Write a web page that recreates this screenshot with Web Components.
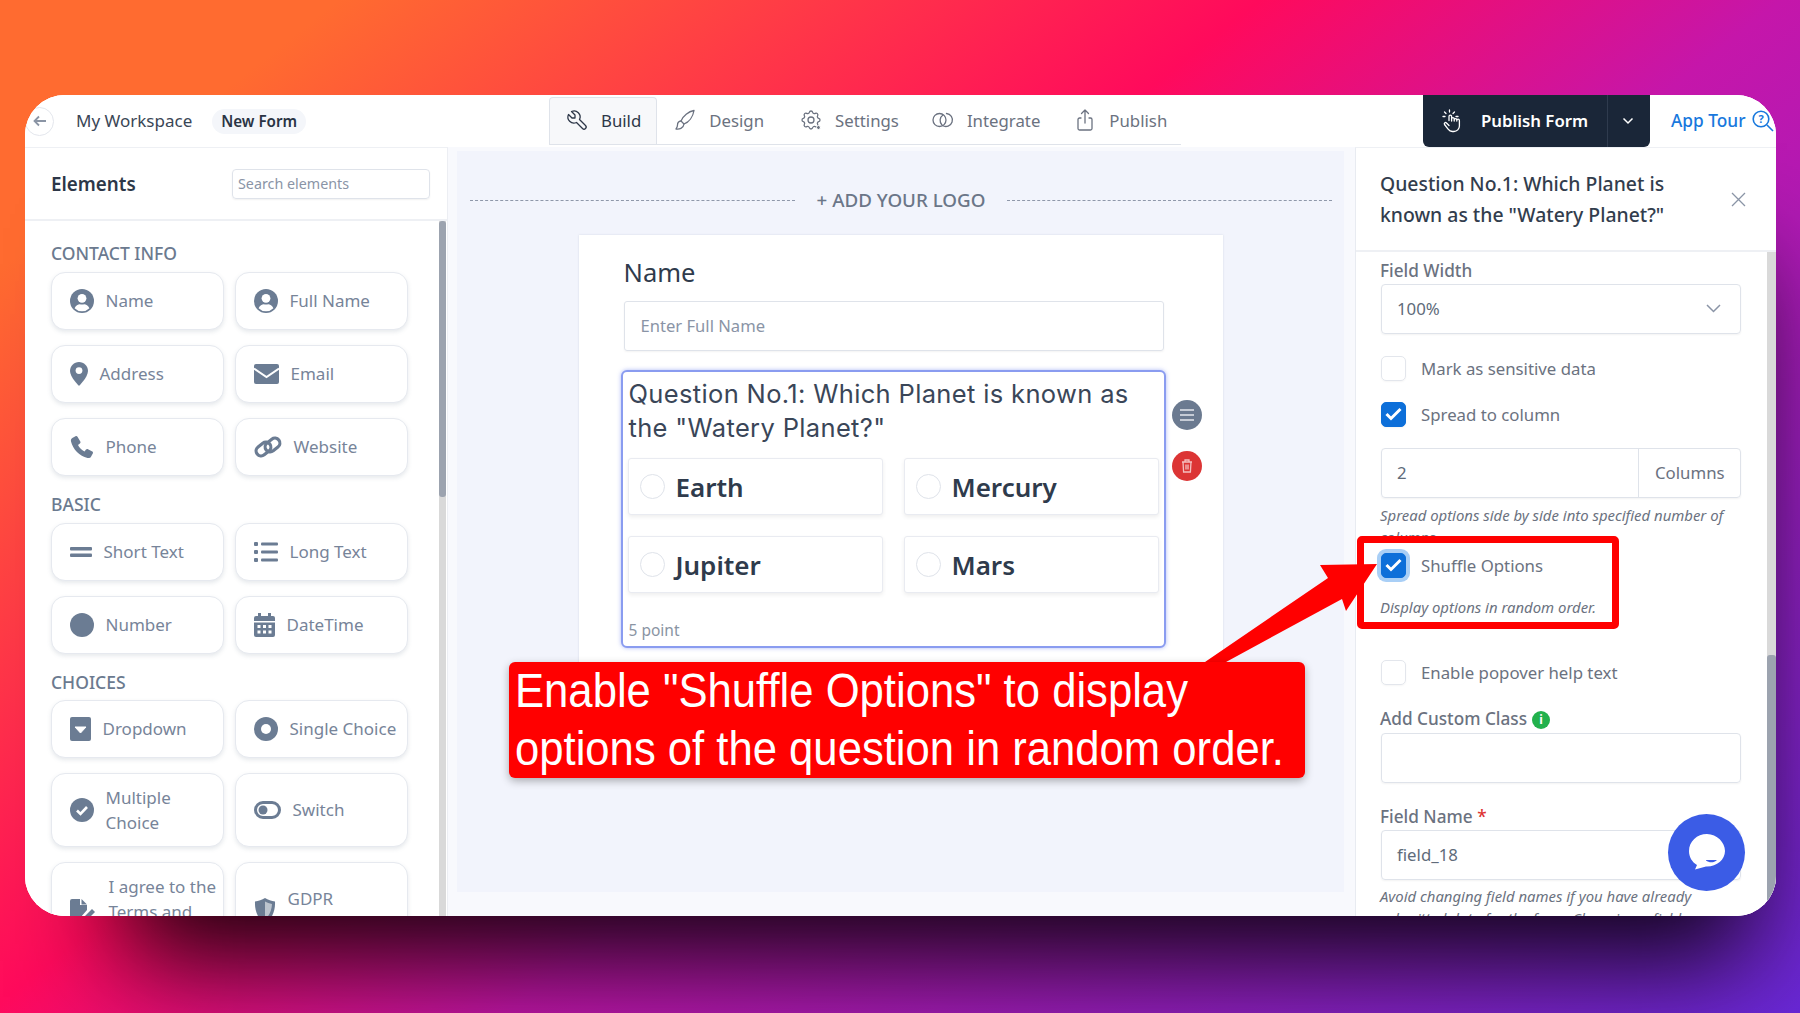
<!DOCTYPE html>
<html lang="en">
<head>
<meta charset="utf-8">
<title>Form builder</title>
<style>
html,body{margin:0;padding:0;height:1013px;overflow:hidden}
body{font-family:"Noto Sans",sans-serif;background:linear-gradient(141.5deg,#ff6b30 11%,#ff0a5c 41%,#c516aa 58%,#6a28d8 100%)}
</style>
</head>
<body>
<app-window>
  <top-bar slot="top"></top-bar>
  <element-panel slot="left"></element-panel>
  <form-canvas slot="center"></form-canvas>
  <settings-panel slot="right"></settings-panel>
</app-window>
<script>
const ICONS={
user:[24,24,'<circle cx="12" cy="12" r="12"/><circle cx="12" cy="9.3" r="4.4" fill="#fff"/><path d="M4.6 19.2c1-2.8 3.6-4 5.2-4 1.4.5 3 .5 4.4 0 1.6 0 4.2 1.2 5.2 4a10.4 10.4 0 0 1-14.8 0z" fill="#fff"/>'],
marker:[18,24,'<path d="M9 0C4 0 0 4 0 9c0 6 9 15 9 15s9-9 9-15C18 4 14 0 9 0z"/><circle cx="9" cy="8.6" r="3.4" fill="#fff"/>'],
mail:[25,20,'<rect width="25" height="20" rx="2"/><path d="M0 4.5 12.5 13 25 4.5" fill="none" stroke="#fff" stroke-width="2"/>'],
phone:[24,24,'<path d="M5.5 1.2 2.3 3C1 3.8.7 5 1 6.5 2.8 14.3 9.7 21.2 17.5 23c1.5.3 2.7 0 3.5-1.3l1.8-3.2c.4-.8.2-1.6-.5-2l-4.3-2.3c-.7-.4-1.5-.2-2 .4l-1.5 1.9c-2.7-1.3-5.2-3.8-6.5-6.5l1.9-1.5c.6-.5.8-1.3.4-2L7.5 1.7c-.4-.7-1.2-.9-2-.5z"/>'],
link:[28,24,'<g fill="none" stroke="currentColor" stroke-width="3.2"><rect x="1.5" y="9" width="16" height="10" rx="5" transform="rotate(-38 9.5 14)"/><rect x="10.5" y="5" width="16" height="10" rx="5" transform="rotate(-38 18.5 10)"/></g>'],
lines:[22,12,'<rect y="1" width="22" height="3.4" rx="1"/><rect y="7.6" width="22" height="3.4" rx="1"/>'],
list:[24,20,'<rect width="4" height="4" rx="1"/><rect y="8" width="4" height="4" rx="1"/><rect y="16" width="4" height="4" rx="1"/><rect x="7" y=".6" width="17" height="2.8" rx="1"/><rect x="7" y="8.6" width="17" height="2.8" rx="1"/><rect x="7" y="16.6" width="17" height="2.8" rx="1"/>'],
circle:[24,24,'<circle cx="12" cy="12" r="12"/>'],
cal:[21,24,'<path d="M4 0h3v3h7V0h3v3h2a2 2 0 0 1 2 2v3H0V5a2 2 0 0 1 2-2h2z"/><path d="M0 9.500h21V22a2 2 0 0 1-2 2H2a2 2 0 0 1-2-2z"/><g fill="#fff"><rect x="3.500" y="12" width="3" height="3"/><rect x="9" y="12" width="3" height="3"/><rect x="14.500" y="12" width="3" height="3"/><rect x="3.500" y="17.500" width="3" height="3"/><rect x="9" y="17.500" width="3" height="3"/><rect x="14.500" y="17.500" width="3" height="3"/></g>'],
drop:[21,24,'<rect width="21" height="24" rx="2"/><path d="M5 10h11l-5.500 6z" fill="#fff" stroke="#fff" stroke-linejoin="round"/>'],
dot:[24,24,'<circle cx="12" cy="12" r="12"/><circle cx="12" cy="12" r="5" fill="#fff"/>'],
check:[24,24,'<circle cx="12" cy="12" r="12"/><path d="M7 12.500l3.500 3.500L17 9" fill="none" stroke="#fff" stroke-width="2.600"/>'],
toggle:[27,18,'<rect x="1.500" y="1.500" width="24" height="15" rx="7.500" fill="none" stroke="currentColor" stroke-width="3"/><circle cx="9" cy="9" r="4.500"/>'],
sign:[27,24,'<path d="M0 2a2 2 0 0 1 2-2h8v6h7v5l-7 8v5H2a2 2 0 0 1-2-2z"/><path d="M11.500 0l5.500 5.500h-5.500z"/><path d="M13 19l9-9 3 3-9 9-4 1z"/>'],
shield:[22,26,'<path d="M11 0c3 2 6.500 3 10 3.500C21.500 13 18 21 11 26 4 21 .5 13 1 3.500 4.500 3 8 2 11 0z"/><path d="M11 3.500v18c4-3.500 6.800-9 7-15.500-2.500-.5-5-1.300-7-2.500z" fill="#fff" opacity=".55"/>']
};
const STROKES={
tool:'<path d="M7 10h3V7L6.500 3.500a6 6 0 0 1 8 8l6 6a2.100 2.100 0 0 1-3 3l-6-6a6 6 0 0 1-8-8z"/>',
brush:'<path d="M21 2.500c-5.500 1-11 5.500-13 10.500l3 3c5-2 9-7.500 10-13.500z"/><path d="M8 13c-2.500.3-3.500 2-3.500 4 0 1.800-.7 3-1.500 4 3 .5 7.500-.5 8-5"/>',
gear:'<path d="M10.325 4.317c.426-1.756 2.924-1.756 3.350 0a1.724 1.724 0 0 0 2.573 1.066c1.543-.94 3.310.826 2.370 2.370a1.724 1.724 0 0 0 1.065 2.572c1.756.426 1.756 2.924 0 3.350a1.724 1.724 0 0 0-1.066 2.573c.94 1.543-.826 3.310-2.370 2.370a1.724 1.724 0 0 0-2.572 1.065c-.426 1.756-2.924 1.756-3.350 0a1.724 1.724 0 0 0-2.573-1.066c-1.543.94-3.310-.826-2.370-2.370a1.724 1.724 0 0 0-1.065-2.572c-1.756-.426-1.756-2.924 0-3.350a1.724 1.724 0 0 0 1.066-2.573c-.94-1.543.826-3.310 2.370-2.370.996.608 2.296.07 2.572-1.065z"/><circle cx="12" cy="12" r="3"/><circle cx="19.500" cy="19.500" r="2" fill="currentColor" stroke="#fff" stroke-width="1"/>',
rings:'<circle cx="8.500" cy="12" r="6.500"/><path d="M15.500 5.500a6.500 6.500 0 1 1-4 12"/><path d="M12 7a6.500 6.500 0 0 0-1 10"/>',
share:'<path d="M8 10H6.500A1.500 1.500 0 0 0 5 11.500v9A1.500 1.500 0 0 0 6.500 22h11a1.500 1.500 0 0 0 1.500-1.500v-9a1.500 1.500 0 0 0-1.500-1.500H16"/><path d="M12 15V2M8.500 5.500 12 2l3.500 3.500"/>',
hand:'<path d="M9 11.500V7.500a1.300 1.300 0 0 1 2.600 0v4.500m0-2a1.300 1.300 0 0 1 2.600 0v2m0-1a1.300 1.300 0 0 1 2.600 0v1m0-.5a1.300 1.300 0 0 1 2.600 0V17a5.500 5.500 0 0 1-5.500 5.500h-1.500c-2 0-3.200-.8-4.300-2.300L4.500 15.500c-.8-1.300 1-2.600 2-1.500L9 16.500"/><path d="M9.500 1v2M4.500 3l1.500 1.500M14.500 3 13 4.500M3 7.500h2M16 7.500h2"/>'
};
function svgFill(n){const [w,h,b]=ICONS[n];return `<svg width="${w}" height="${h}" viewBox="0 0 ${w} ${h}" fill="currentColor" style="display:block;flex:none">${b}</svg>`}
function svgStroke(n,s=24,c=1.4){return `<svg width="${s}" height="${s}" viewBox="0 0 24 24" fill="none" stroke="currentColor" stroke-width="${c}" stroke-linecap="round" stroke-linejoin="round" style="display:block;flex:none">${STROKES[n]}</svg>`}
function def(name,css,html,init){
  customElements.define(name,class extends HTMLElement{
    constructor(){super();this.attachShadow({mode:'open'});}
    connectedCallback(){
      if(this.shadowRoot.childNodes.length)return;
      const h=typeof html==='function'?html(this):html;
      this.shadowRoot.innerHTML=`<style>${css}</style>${h}`;
      if(init)init(this);
    }
  });
}

def('app-window',`
:host{display:block;position:relative;width:1751px;height:821px;margin:95px 0 0 25px;border-radius:40px;background:#fff;box-shadow:37px 107px 100px -62px rgba(0,0,0,.9)}
.clip{height:100%;border-radius:40px;overflow:hidden;display:flex;flex-direction:column;position:relative;background:#fff}
.main{flex:1;display:flex;min-height:0}
::slotted([slot=left]){flex:none}
::slotted([slot=center]){flex:1;min-width:0}
::slotted([slot=right]){flex:none}
.arrow{position:absolute;left:0;top:0;pointer-events:none}
.mark{position:absolute;left:1332px;top:441px;width:248px;height:79px;border:7px solid #f00;border-radius:5px;pointer-events:none}
.banner{position:absolute;left:484px;top:567px;width:796px;height:116px;box-sizing:border-box;padding:0 6px;background:#f00;border-radius:6px;box-shadow:0 3px 8px rgba(0,0,0,.3);color:#fff;font:48px/57.500px "Liberation Sans",sans-serif;white-space:nowrap}
.banner span{display:block;transform:scaleX(.909);transform-origin:0 50%}
.chat{position:absolute;left:1643px;top:719px;width:77px;height:77px;border-radius:50%;background:#3b5ce6;display:flex;align-items:center;justify-content:center}
`,`
<div class="clip">
  <slot name="top"></slot>
  <div class="main"><slot name="left"></slot><slot name="center"></slot><slot name="right"></slot></div>
  <svg class="arrow" width="1751" height="821" viewBox="25 95 1751 821"><polygon fill="#f00" points="1205,662 1328,578 1320,565 1377,564 1346,611 1342,599 1215,668"/></svg>
  <div class="mark"></div>
  <div class="banner"><span>Enable "Shuffle Options" to display</span><span>options of the question in random order.</span></div>
  <div class="chat"><svg width="38" height="42" viewBox="0 0 38 42"><path d="M19 2C9 2 1 9.500 1 19c0 6 3 11 8 14l-2 4.500 11-3c.300 0 .700 0 1 0 10 0 18-7 18-15.500S29 2 19 2z" fill="#fff"/><path d="M18 28.500c3 2.500 8 2.500 11-.500h-11z" fill="#3b5ce6"/></svg></div>
</div>`);

def('tab-item',`
:host{display:flex;align-items:center;gap:12px;padding:0 15px 2px;height:47px;box-sizing:border-box;color:#6b7280;font-size:16.800px;border:1px solid transparent;border-bottom:0;border-radius:4px 4px 0 0;white-space:nowrap}
:host([active]){background:#f7f8fa;border-color:#dfe3ea;color:#2d3748}
`,h=>`${svgStroke(h.getAttribute('icon'),24,1.300)}<slot></slot>`);

def('top-bar',`
:host{display:flex;height:52px;flex:none;align-items:stretch;background:#fff;color:#374151}
.left{width:524px;display:flex;align-items:center;flex:none;padding-bottom:1px;box-sizing:border-box}
.back{width:29px;height:29px;border-radius:50%;border:1px solid #e3e6ec;box-sizing:border-box;display:flex;align-items:center;justify-content:center;color:#8b95a5;margin-top:1px}
.ws{margin-left:22px;font-size:17px;color:#3a4656;margin-bottom:1px}
.pill{margin-left:20px;padding:0 9px;height:25px;line-height:25px;border-radius:13px;background:#f4f6fa;font-size:15.200px;font-weight:600;color:#2a3444;margin-top:1px}
.tabs{display:flex;align-self:flex-start;margin-top:2px;height:48px;width:632px;box-sizing:border-box;border-bottom:1px solid #dfe3ea}
.pub{margin-left:auto;width:227px;flex:none;background:#1a2638;color:#fff;border-radius:0 0 6px 6px;display:flex;align-items:center;font-weight:600;font-size:16.800px;white-space:nowrap;padding-bottom:1px;box-sizing:border-box}
.pub svg{margin-left:17px}
.pub span{margin-left:17px;width:126px}
.sep{width:1px;align-self:stretch;background:#2f3b4e;margin-left:0;margin-bottom:-1px}
.chev{flex:1;display:flex;justify-content:center;padding-right:2px}
.chev svg{margin:0}
.tour{width:126px;flex:none;display:flex;align-items:center;padding:0 0 1px 21px;box-sizing:border-box;color:#1878dd;font-size:17.300px;font-weight:500;white-space:nowrap;gap:7px}
`,`
<div class="left">
  <div class="back"><svg width="14" height="12" viewBox="0 0 14 12" fill="none" stroke="currentColor" stroke-width="1.800"><path d="M13 6H2M6 1.500 1.500 6 6 10.500"/></svg></div>
  <div class="ws">My Workspace</div><div class="pill">New Form</div>
</div>
<div class="tabs">
  <tab-item icon="tool" active>Build</tab-item><tab-item icon="brush" style="margin-right:3px">Design</tab-item><tab-item icon="gear">Settings</tab-item><tab-item icon="rings" style="margin-right:1px">Integrate</tab-item><tab-item icon="share">Publish</tab-item>
</div>
<div class="pub">${svgStroke('hand',24,1.300)}<span>Publish Form</span><div class="sep"></div><div class="chev"><svg width="12" height="8" viewBox="0 0 12 8" fill="none" stroke="#fff" stroke-width="1.500"><path d="M1.500 1.500 6 6l4.500-4.500"/></svg></div></div>
<div class="tour">App Tour<svg width="22" height="22" viewBox="0 0 22 22" fill="none" stroke="currentColor" stroke-width="1.600" style="flex:none"><circle cx="9" cy="9" r="7.800"/><path d="M15 15l6 6"/><text x="9" y="13" font-size="11" font-weight="700" font-family="Noto Sans" text-anchor="middle" fill="currentColor" stroke="none">?</text></svg></div>
`);

def('el-card',`
:host{display:flex;align-items:center;gap:11.500px;box-sizing:border-box;min-height:58px;padding:11px 4px 11px 18px;background:#fff;border:1px solid #e6e9ef;border-radius:14px;box-shadow:0 2px 4px rgba(100,116,139,.16);color:#778499;font-size:17px;line-height:25px}
.i{color:#6b7c93}
`,h=>`<span class="i">${svgFill(h.getAttribute('icon'))}</span><div><slot></slot></div>`);

def('el-group',`
:host{display:block;margin-top:16px}
:host(:first-child){margin-top:0}
h3{margin:0 0 var(--gap,5.400px);font-size:17.500px;line-height:25.600px;font-weight:500;color:#6b7a8f;text-transform:uppercase}
.g{display:grid;grid-template-columns:173px 173px;gap:15px 11px}
`,h=>`<h3>${h.getAttribute('label')}</h3><div class="g"><slot></slot></div>`);

def('scroll-rail',`
:host{display:block;flex:none;background:#d9d9d9;position:relative}
.t{position:absolute;left:0;right:0;background:#9ca3af;top:var(--top,0);height:var(--h,100px);border-radius:3px}
`,`<div class="t"></div>`);

def('element-panel',`
:host{display:flex;flex-direction:column;width:423px;height:100%;background:#fff;border-right:1px solid #eceef3;border-top:1px solid #eef0f4;box-sizing:border-box}
.head{height:73px;flex:none;box-sizing:border-box;border-bottom:2px solid #eef0f4;display:flex;align-items:center;padding:1px 17px 0 26px;justify-content:space-between}
.head b{font-size:18.800px;font-weight:600;color:#2d3748}
.search{width:198px;height:30px;box-sizing:border-box;border:1px solid #dfe3ea;border-radius:4px;color:#8a94a6;font-size:14.300px;line-height:27px;padding-left:5px;box-shadow:0 1px 2px rgba(0,0,0,.06)}
.body{flex:1;display:flex;min-height:0}
.list{flex:1;overflow:hidden;padding:20px 0 0 26px}
scroll-rail{width:7px;margin-right:1px;--h:276px}
`,`
<div class="head"><b>Elements</b><div class="search">Search elements</div></div>
<div class="body"><div class="list">
<el-group label="Contact Info"><el-card icon="user">Name</el-card><el-card icon="user">Full Name</el-card><el-card icon="marker">Address</el-card><el-card icon="mail">Email</el-card><el-card icon="phone">Phone</el-card><el-card icon="link">Website</el-card></el-group>
<el-group label="Basic"><el-card icon="lines">Short Text</el-card><el-card icon="list">Long Text</el-card><el-card icon="circle">Number</el-card><el-card icon="cal">DateTime</el-card></el-group>
<el-group label="Choices" style="--gap:4.400px"><el-card icon="drop">Dropdown</el-card><el-card icon="dot">Single Choice</el-card><el-card icon="check">Multiple Choice</el-card><el-card icon="toggle">Switch</el-card><el-card icon="sign">I agree to the Terms and Conditions</el-card><el-card icon="shield">GDPR Agreement</el-card></el-group>
</div><scroll-rail></scroll-rail></div>`);

def('option-card',`
:host{display:flex;align-items:center;gap:11px;height:57px;box-sizing:border-box;padding-left:11px;border:1px solid #e9ebf1;border-radius:3px;background:#fff;box-shadow:0 2px 4px rgba(0,0,0,.07);font-size:26px;font-weight:600;color:#2f3b4c}
i{width:25px;height:25px;box-sizing:border-box;border:1px solid #dfe3ea;border-radius:50%;flex:none}
`,`<i></i><slot></slot>`);

def('question-card',`
:host{display:block;position:relative;width:545px;height:278px;margin-left:-3px;box-sizing:border-box;border:2px solid #8a9cf0;border-radius:6px;box-shadow:0 0 4px rgba(120,140,240,.6);padding:5px 5px 4px;background:#fff}
.q{font:400 25.500px/34px Inter,sans-serif;color:#3a4658;letter-spacing:.35px;white-space:nowrap;margin-left:1px}
.g{display:grid;grid-template-columns:255px 255px;gap:21px;margin-top:13px}
.p{margin:25px 0 0 1px;font-size:15.500px;color:#8a94a3;line-height:24px}
.act{position:absolute;left:549px;width:30px;height:30px;border-radius:50%;display:flex;align-items:center;justify-content:center}
.a1{top:28px;background:#6b7a90}.a2{top:79px;background:#dc3535}
`,`
<div class="q">Question No.1: Which Planet is known as<br>the "Watery Planet?"</div>
<div class="g"><option-card>Earth</option-card><option-card>Mercury</option-card><option-card>Jupiter</option-card><option-card>Mars</option-card></div>
<div class="p">5 point</div>
<div class="act a1"><svg width="14" height="12" viewBox="0 0 14 12" fill="#c6ccd6"><rect y="0" width="14" height="2"/><rect y="5" width="14" height="2"/><rect y="10" width="14" height="2"/></svg></div>
<div class="act a2"><svg width="12" height="14" viewBox="0 0 12 14" fill="none" stroke="#f3c0c0" stroke-width="1.300"><path d="M1 3h10M4 3V1h4v2M2 3l.600 10h6.800L10 3M5 5.500v5M7 5.500v5"/></svg></div>
`);

def('form-canvas',`
:host{display:block;background:#f8f9fd;padding:4px 11px 24px 9px;box-sizing:border-box;height:100%;border-top:0}
.c{height:100%;background:#f2f4fc;padding-top:1px;box-sizing:border-box;overflow:hidden}
.logo{display:flex;align-items:center;gap:22px;margin:31px 12px 0 13px;height:34px;font-size:18.800px;font-weight:500;color:#6b7688;white-space:nowrap}
.logo i{flex:1;border-top:1px dashed #8f98aa}
.card{width:644px;height:465px;margin:18px auto 0;background:#fff;box-sizing:border-box;padding:20px 0 0 45px;box-shadow:0 0 2px rgba(100,116,139,.2)}
.n{font-size:25.500px;line-height:34px;color:#2f3b4c}
.in{width:540px;height:50px;box-sizing:border-box;margin:12px 0 19px;border:1px solid #dfe3ea;border-radius:3px;font-size:16.600px;line-height:47px;padding-left:16px;color:#8a94a6;box-shadow:0 1px 2px rgba(0,0,0,.05)}
`,`
<div class="c">
  <div class="logo"><i></i><span>+ ADD YOUR LOGO</span><i></i></div>
  <div class="card"><div class="n">Name</div><div class="in">Enter Full Name</div><question-card></question-card></div>
</div>`);

def('check-row',`
:host{display:flex;align-items:center;gap:15px;font-size:16.800px;color:#6b7280;height:25px;margin-top:var(--mt,0)}
i{width:25px;height:25px;box-sizing:border-box;border:1px solid #e3e6ec;border-radius:5px;flex:none;display:flex;align-items:center;justify-content:center;box-shadow:0 1px 2px rgba(0,0,0,.04)}
:host([on]) i{background:#0d6fd9;border-color:#0d6fd9}
:host([focus]) i{box-shadow:0 0 0 4px #a9cff6}
`,h=>`<i>${h.hasAttribute('on')?'<svg width="17" height="14" viewBox="0 0 17 14" fill="none" stroke="#fff" stroke-width="3"><path d="M1.500 7l4.500 4.500L15.500 2"/></svg>':''}</i><slot></slot>`);

def('settings-panel',`
:host{display:flex;flex-direction:column;width:421px;height:100%;box-sizing:border-box;background:#fff;border-left:1px solid #e8ebf1;border-top:1px solid #eef0f4}
.head{height:104px;flex:none;box-sizing:border-box;border-bottom:2px solid #eef0f4;padding:20px 30px 0 24px;display:flex;justify-content:space-between}
.t{font-size:19.400px;font-weight:500;line-height:31px;color:#323d4d;width:320px}
.x{margin-top:24px;color:#8a94a6}
.body{flex:1;display:flex;min-height:0}
.c{flex:1;padding:6px 26px 0 25px;overflow:hidden;min-width:0}
scroll-rail{width:9px;--top:403px;--h:300px}
label{display:block;font-size:17.200px;font-weight:500;line-height:25.600px;color:#6b7280;margin-left:-1px}
.f{height:50px;box-sizing:border-box;border:1px solid #dfe3ea;border-radius:4px;display:flex;align-items:center;padding-left:15px;font-size:16.800px;color:#606b7a;box-shadow:0 1px 2px rgba(0,0,0,.05);justify-content:space-between}
.cols{padding:0;margin-top:21px}
.cols span{padding-left:15px}
.cols b{font-weight:400;width:102px;height:100%;box-sizing:border-box;border-left:1px solid #dfe3ea;line-height:47px;padding-left:16px;color:#6b7280}
.h{font-size:14.900px;font-style:italic;line-height:22px;color:#6b7280;margin-left:-1px}
.req{color:#d33}
.info{display:inline-block;width:18px;height:18px;border-radius:50%;background:#22b14c;vertical-align:1px;margin-left:5px;color:#fff;font:700 12px/18px "Noto Sans",sans-serif;text-align:center}
`,`
<div class="head"><div class="t">Question No.1: Which Planet is known as the "Watery Planet?"</div><svg class="x" width="15" height="15" viewBox="0 0 15 15" stroke="currentColor" stroke-width="1.300"><path d="M1 1l13 13M14 1 1 14"/></svg></div>
<div class="body"><div class="c">
<label>Field Width</label>
<div class="f">100%<svg style="margin-right:19px" width="15" height="9" viewBox="0 0 15 9" fill="none" stroke="#8a94a6" stroke-width="1.500"><path d="M1 1l6.500 6.500L14 1"/></svg></div>
<check-row style="--mt:22px">Mark as sensitive data</check-row>
<check-row style="--mt:21px" on>Spread to column</check-row>
<div class="f cols"><span>2</span><b>Columns</b></div>
<div class="h" style="margin-top:6px">Spread options side by side into specified number of columns.</div>
<check-row style="--mt:5px" on focus>Shuffle Options</check-row>
<div class="h" style="margin-top:18px">Display options in random order.</div>
<check-row style="--mt:42px">Enable popover help text</check-row>
<label style="margin-top:21px">Add Custom Class<span class="info">i</span></label>
<div class="f" style="margin-top:2px"></div>
<label style="margin-top:21px">Field Name <span class="req">*</span></label>
<div class="f" style="margin-top:0">field_18</div>
<div class="h" style="margin-top:5px">Avoid changing field names if you have already submitted data for the form. Changing a field name may affect saved entries.</div>
</div><scroll-rail></scroll-rail></div>`);
</script>
</body>
</html>
